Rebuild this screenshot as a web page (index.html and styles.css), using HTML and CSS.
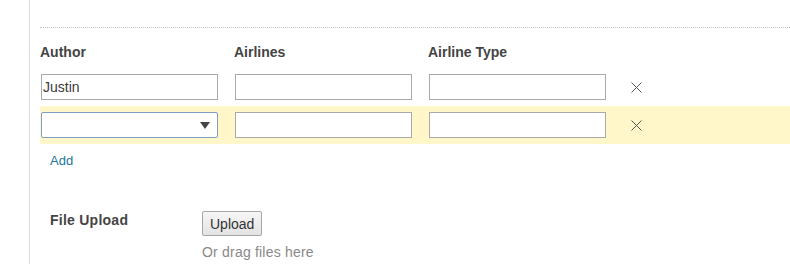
FILE: index.html
```html
<!DOCTYPE html>
<html>
<head>
<meta charset="utf-8">
<link rel="stylesheet" href="styles.css">
</head>
<body>
<div class="page">
  <div class="rule"></div>
  <div class="repeater">
    <div class="head">
      <div class="cell">Author</div>
      <div class="cell">Airlines</div>
      <div class="cell">Airline Type</div>
    </div>
    <div class="row">
      <div class="cell"><input class="field" type="text" value="Justin"></div>
      <div class="cell"><input class="field" type="text"></div>
      <div class="cell"><input class="field" type="text"></div>
      <div class="del"><svg width="11" height="11" viewBox="0 0 11 11"><path d="M0.5 0.5 L10.5 10.5 M10.5 0.5 L0.5 10.5" stroke="#555" stroke-width="1" fill="none"/></svg></div>
    </div>
    <div class="row active">
      <div class="cell">
        <div class="select-wrap">
          <select class="field select"><option></option></select>
          <span class="arrow"></span>
        </div>
      </div>
      <div class="cell"><input class="field" type="text"></div>
      <div class="cell"><input class="field" type="text"></div>
      <div class="del"><svg width="11" height="11" viewBox="0 0 11 11"><path d="M0.5 0.5 L10.5 10.5 M10.5 0.5 L0.5 10.5" stroke="#555" stroke-width="1" fill="none"/></svg></div>
    </div>
    <a class="add" href="#">Add</a>
  </div>
  <div class="upload">
    <div class="upload-label">File Upload</div>
    <div class="upload-body">
      <button class="btn" type="button">Upload</button>
      <div class="hint">Or drag files here</div>
    </div>
  </div>
</div>
</body>
</html>
```

FILE: styles.css
```css
html, body {
  margin: 0;
  padding: 0;
  background: #fff;
  font-family: "Liberation Sans", Arial, sans-serif;
  color: #333;
}

.page {
  margin-left: 29px;
  border-left: 1px solid #dcdcdc;
  padding-left: 10px;
  height: 264px;
  box-sizing: border-box;
  overflow: hidden;
}

.rule {
  height: 0;
  margin-top: 27px;
  border-top: 1px dotted #c4c4c4;
}

.head {
  display: flex;
  margin-top: 16px;
  font-size: 14px;
  line-height: 16px;
  font-weight: bold;
  color: #444;
}

.cell {
  width: 194px;
  flex: none;
}

.row {
  display: flex;
  align-items: center;
  padding: 6px 0;
}

.head + .row {
  margin-top: 8px;
}

.row.active {
  background: #fff6c9;
}

.field {
  display: block;
  box-sizing: border-box;
  width: 177px;
  height: 26px;
  margin: 0 0 0 1px;
  padding: 0 1px;
  border: 1px solid #a9a9a9;
  border-radius: 0;
  background: #fff;
  font-family: "Liberation Sans", Arial, sans-serif;
  font-size: 14px;
  color: #3a3a3a;
  outline: none;
}

.select-wrap {
  position: relative;
  width: 178px;
}

.select {
  appearance: none;
  -webkit-appearance: none;
  border: 1px solid #7f9dc4;
  border-radius: 2px;
  background: #fff;
}

.arrow {
  position: absolute;
  top: 10px;
  right: 8px;
  width: 0;
  height: 0;
  border-left: 5px solid transparent;
  border-right: 5px solid transparent;
  border-top: 7px solid #444;
}

.del {
  display: flex;
  margin-left: 9px;
}

.del svg {
  display: block;
}

.add {
  display: inline-block;
  margin: 9px 0 0 10px;
  font-size: 13px;
  line-height: 16px;
  color: #21759b;
  text-decoration: none;
}

.upload {
  display: flex;
  align-items: flex-start;
  margin-top: 42px;
  padding-left: 10px;
}

.upload-label {
  width: 152px;
  flex: none;
  margin-top: 1px;
  font-size: 14px;
  line-height: 16px;
  font-weight: bold;
  letter-spacing: 0.25px;
  color: #444;
}

.btn {
  display: block;
  box-sizing: border-box;
  height: 25px;
  padding: 0 7px;
  border: 1px solid #a6a6a6;
  border-radius: 2px;
  background: linear-gradient(#f6f6f6, #e3e3e3);
  font-family: "Liberation Sans", Arial, sans-serif;
  font-size: 14px;
  color: #333;
}

.hint {
  margin-top: 8px;
  font-size: 14px;
  line-height: 16px;
  letter-spacing: 0.2px;
  color: #888;
}
```
